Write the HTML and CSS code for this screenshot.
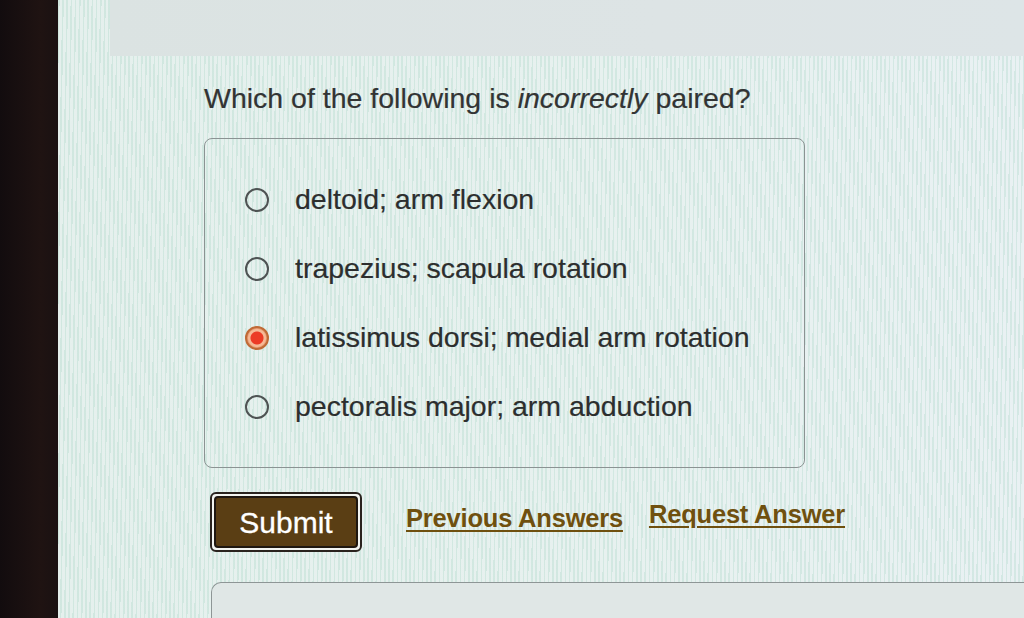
FILE: index.html
```html
<!DOCTYPE html>
<html lang="en">
<head>
<meta charset="utf-8">
<title>Question</title>
<link rel="stylesheet" href="styles.css">
</head>
<body>
<div class="frame">
  <div class="bezel"></div>
  <main class="screen">
    <div class="topbar"></div>
    <section class="item">
      <p class="prompt">Which of the following is <em>incorrectly</em> paired?</p>
      <div class="choices">
        <label class="choice"><span class="radio"></span><span class="label">deltoid; arm flexion</span></label>
        <label class="choice"><span class="radio"></span><span class="label">trapezius; scapula rotation</span></label>
        <label class="choice"><span class="radio checked"></span><span class="label">latissimus dorsi; medial arm rotation</span></label>
        <label class="choice"><span class="radio"></span><span class="label">pectoralis major; arm abduction</span></label>
      </div>
      <div class="actions">
        <button class="submit" type="button"><span class="submit-face">Submit</span></button>
        <a class="link" href="#">Previous Answers</a>
        <a class="link link-up" href="#">Request Answer</a>
      </div>
      <div class="feedback"></div>
    </section>
  </main>
</div>
</body>
</html>
```

FILE: styles.css
```css
html, body {
  margin: 0;
  padding: 0;
  height: 100%;
  overflow: hidden;
}

body {
  font-family: "Liberation Sans", Arial, sans-serif;
  background: #170f0f;
}

.frame {
  display: flex;
  height: 618px;
}

.bezel {
  width: 58px;
  flex: none;
  background: linear-gradient(90deg, #120c0e 0%, #1f1312 70%, #1a1112 100%);
}

.screen {
  flex: 1;
  display: flex;
  flex-direction: column;
  overflow: hidden;
  background:
    repeating-linear-gradient(91deg, rgba(150, 205, 185, 0.26) 0 1.6px, rgba(255, 255, 255, 0) 1.6px 4.2px),
    linear-gradient(90deg, #e5f0ed 0%, #e7f1ef 55%, #e9f1f3 100%);
}

.topbar {
  height: 56px;
  margin-left: 52px;
  flex: none;
  background: linear-gradient(90deg, #dbe3e2 0%, #dde4e5 60%, #dde5e7 100%);
}

.item {
  padding-left: 146px;
  display: flex;
  flex-direction: column;
  align-items: flex-start;
}

.prompt {
  margin: 25px 0 0;
  font-size: 28.5px;
  line-height: 34px;
  color: #323434;
  -webkit-text-stroke: 0.2px #323434;
}

.prompt em {
  font-style: italic;
}

.choices {
  margin-top: 23px;
  width: 601px;
  height: 330px;
  box-sizing: border-box;
  border: 1.5px solid #8b9393;
  border-radius: 8px;
  padding: 26px 0 0 40px;
  display: flex;
  flex-direction: column;
}

.choice {
  height: 69px;
  display: flex;
  align-items: center;
  gap: 26px;
}

.radio {
  width: 24px;
  height: 24px;
  box-sizing: border-box;
  border: 2.6px solid #4e5353;
  border-radius: 50%;
  flex: none;
  background: transparent;
}

.radio.checked {
  border: 2px solid #c06a36;
  background: radial-gradient(circle, #ec3b26 0 6px, #f6b996 7px 8.5px, #e59a70 9.5px);
}

.label {
  font-size: 28.5px;
  color: #2c2e2e;
  -webkit-text-stroke: 0.2px #2c2e2e;
}

.actions {
  margin-top: 24px;
  padding-left: 6px;
  display: flex;
  align-items: center;
}

.submit {
  width: 152px;
  height: 60px;
  padding: 2px;
  border: 2px solid #2a231e;
  border-radius: 6px;
  background: #f2f4f0;
  cursor: pointer;
}

.submit-face {
  display: flex;
  align-items: center;
  justify-content: center;
  height: 100%;
  box-sizing: border-box;
  border: 2px solid #1f1710;
  border-radius: 4px;
  background: #5a3e14;
  color: #ffffff;
  font-family: "Liberation Sans", Arial, sans-serif;
  font-size: 30px;
  -webkit-text-stroke: 0.3px #ffffff;
  padding-top: 2px;
}

.link {
  font-size: 25.5px;
  font-weight: bold;
  color: #6f500f;
  text-decoration: underline;
  text-decoration-thickness: 1.5px;
  text-underline-offset: 3px;
  margin-bottom: 8px;
  letter-spacing: -0.2px;
}

.link:first-of-type {
  margin-left: 44px;
}

.link + .link {
  margin-left: 26px;
}

.link-up {
  margin-bottom: 16px;
}

.feedback {
  margin-top: 30px;
  margin-left: 7px;
  width: 900px;
  height: 80px;
  border: 1.5px solid #8e9696;
  border-right: none;
  border-radius: 10px 0 0 0;
  background: #e0e7e6;
}
```
